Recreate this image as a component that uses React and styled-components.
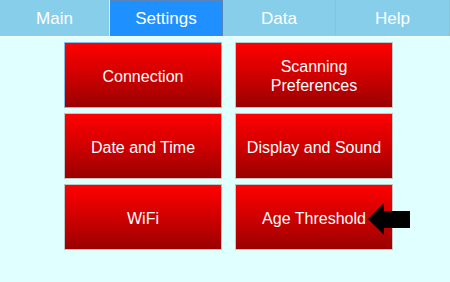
import React from "react";
import styled, { createGlobalStyle } from "styled-components";

const Global = createGlobalStyle`
  html, body {
    margin: 0;
    padding: 0;
    background: #e0ffff;
    font-family: "Liberation Sans", Arial, sans-serif;
  }
`;

const Screen = styled.div`
  width: 450px;
  height: 282px;
  background: #e0ffff;
  overflow: hidden;
`;

const TabBar = styled.div`
  display: grid;
  grid-template-columns: 110px 113px 113px 114px;
  height: 36px;
  border-bottom: 1px solid #f4ffff;
`;

const Tab = styled.div`
  display: flex;
  align-items: center;
  justify-content: center;
  padding-top: 1px;
  background: ${(p) => (p.$active ? "#1e90ff" : "#87ceeb")};
  color: #fff;
  font-size: 17px;
  box-sizing: border-box;
  border-right: 1px solid ${(p) => (p.$active ? "#5a84b8" : "#b4b4b4")};
  ${(p) => p.$active && "border-top: 1px solid #5a84b8;"}
  ${(p) => p.$first && "border-right-color: #d8eef6;"}
`;

const Grid = styled.div`
  display: grid;
  grid-template-columns: 158px 158px;
  grid-auto-rows: 66px;
  column-gap: 13px;
  row-gap: 5px;
  padding: 5px 0 0 64px;
`;

const MenuButton = styled.div`
  position: relative;
  display: flex;
  align-items: center;
  justify-content: center;
  text-align: center;
  padding-top: 2px;
  box-sizing: border-box;
  border: 1px solid ${(p) => (p.$focus ? "#8fb8e0" : "#c4c4c4")};
  background: linear-gradient(to bottom, #ff0000 0%, #d00000 50%, #990000 100%);
  color: #fff;
  font-size: 16px;
  line-height: 19px;
`;

const Pointer = styled.svg`
  position: absolute;
  left: 132px;
  top: 18px;
  width: 43px;
  height: 32px;
`;

export default function App() {
  return (
    <Screen>
      <Global />
      <TabBar>
        <Tab $first>Main</Tab>
        <Tab $active>Settings</Tab>
        <Tab>Data</Tab>
        <Tab>Help</Tab>
      </TabBar>
      <Grid>
        <MenuButton $focus>Connection</MenuButton>
        <MenuButton>
          Scanning
          <br />
          Preferences
        </MenuButton>
        <MenuButton>Date and Time</MenuButton>
        <MenuButton>Display and Sound</MenuButton>
        <MenuButton>WiFi</MenuButton>
        <MenuButton>
          Age Threshold
          <Pointer viewBox="0 0 43 32">
            <path d="M0 16 L16 0 L16 8 L42 8 L42 25 L16 25 L16 32 Z" fill="#000" />
          </Pointer>
        </MenuButton>
      </Grid>
    </Screen>
  );
}
